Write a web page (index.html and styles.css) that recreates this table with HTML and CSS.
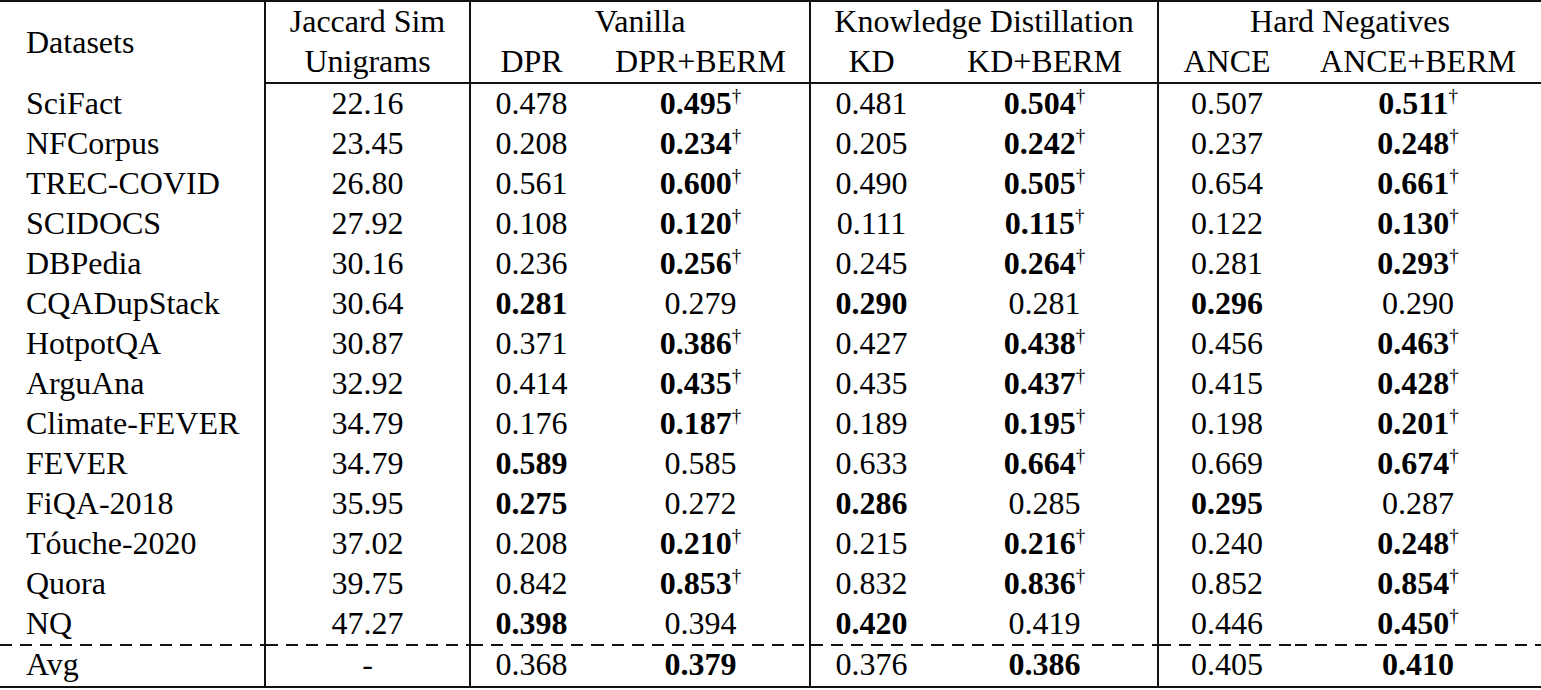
FILE: index.html
```html
<!DOCTYPE html>
<html lang="en">
<head>
<meta charset="utf-8">
<title>Results table</title>
<link rel="stylesheet" href="styles.css">
</head>
<body>
<table class="results">
  <colgroup>
    <col class="c-ds"><col class="c-jac"><col class="c-dpr"><col class="c-dprb"><col class="c-kd"><col class="c-kdb"><col class="c-ance"><col class="c-anceb">
  </colgroup>
  <thead>
    <tr class="h1">
      <th rowspan="2" class="ds">Datasets</th>
      <th class="vl">Jaccard Sim</th>
      <th colspan="2" class="vl">Vanilla</th>
      <th colspan="2" class="vl">Knowledge Distillation</th>
      <th colspan="2" class="vl">Hard Negatives</th>
    </tr>
    <tr class="h2">
      <th class="vl">Unigrams</th>
      <th class="vl">DPR</th><th>DPR+BERM</th>
      <th class="vl">KD</th><th>KD+BERM</th>
      <th class="vl">ANCE</th><th>ANCE+BERM</th>
    </tr>
  </thead>
  <tbody>
    <tr><td class="ds">SciFact</td><td class="vl">22.16</td><td class="vl">0.478</td><td><b>0.495</b><sup>†</sup></td><td class="vl">0.481</td><td><b>0.504</b><sup>†</sup></td><td class="vl">0.507</td><td><b>0.511</b><sup>†</sup></td></tr>
    <tr><td class="ds">NFCorpus</td><td class="vl">23.45</td><td class="vl">0.208</td><td><b>0.234</b><sup>†</sup></td><td class="vl">0.205</td><td><b>0.242</b><sup>†</sup></td><td class="vl">0.237</td><td><b>0.248</b><sup>†</sup></td></tr>
    <tr><td class="ds">TREC-COVID</td><td class="vl">26.80</td><td class="vl">0.561</td><td><b>0.600</b><sup>†</sup></td><td class="vl">0.490</td><td><b>0.505</b><sup>†</sup></td><td class="vl">0.654</td><td><b>0.661</b><sup>†</sup></td></tr>
    <tr><td class="ds">SCIDOCS</td><td class="vl">27.92</td><td class="vl">0.108</td><td><b>0.120</b><sup>†</sup></td><td class="vl">0.111</td><td><b>0.115</b><sup>†</sup></td><td class="vl">0.122</td><td><b>0.130</b><sup>†</sup></td></tr>
    <tr><td class="ds">DBPedia</td><td class="vl">30.16</td><td class="vl">0.236</td><td><b>0.256</b><sup>†</sup></td><td class="vl">0.245</td><td><b>0.264</b><sup>†</sup></td><td class="vl">0.281</td><td><b>0.293</b><sup>†</sup></td></tr>
    <tr><td class="ds">CQADupStack</td><td class="vl">30.64</td><td class="vl"><b>0.281</b></td><td>0.279</td><td class="vl"><b>0.290</b></td><td>0.281</td><td class="vl"><b>0.296</b></td><td>0.290</td></tr>
    <tr><td class="ds">HotpotQA</td><td class="vl">30.87</td><td class="vl">0.371</td><td><b>0.386</b><sup>†</sup></td><td class="vl">0.427</td><td><b>0.438</b><sup>†</sup></td><td class="vl">0.456</td><td><b>0.463</b><sup>†</sup></td></tr>
    <tr><td class="ds">ArguAna</td><td class="vl">32.92</td><td class="vl">0.414</td><td><b>0.435</b><sup>†</sup></td><td class="vl">0.435</td><td><b>0.437</b><sup>†</sup></td><td class="vl">0.415</td><td><b>0.428</b><sup>†</sup></td></tr>
    <tr><td class="ds">Climate-FEVER</td><td class="vl">34.79</td><td class="vl">0.176</td><td><b>0.187</b><sup>†</sup></td><td class="vl">0.189</td><td><b>0.195</b><sup>†</sup></td><td class="vl">0.198</td><td><b>0.201</b><sup>†</sup></td></tr>
    <tr><td class="ds">FEVER</td><td class="vl">34.79</td><td class="vl"><b>0.589</b></td><td>0.585</td><td class="vl">0.633</td><td><b>0.664</b><sup>†</sup></td><td class="vl">0.669</td><td><b>0.674</b><sup>†</sup></td></tr>
    <tr><td class="ds">FiQA-2018</td><td class="vl">35.95</td><td class="vl"><b>0.275</b></td><td>0.272</td><td class="vl"><b>0.286</b></td><td>0.285</td><td class="vl"><b>0.295</b></td><td>0.287</td></tr>
    <tr><td class="ds">Tóuche-2020</td><td class="vl">37.02</td><td class="vl">0.208</td><td><b>0.210</b><sup>†</sup></td><td class="vl">0.215</td><td><b>0.216</b><sup>†</sup></td><td class="vl">0.240</td><td><b>0.248</b><sup>†</sup></td></tr>
    <tr><td class="ds">Quora</td><td class="vl">39.75</td><td class="vl">0.842</td><td><b>0.853</b><sup>†</sup></td><td class="vl">0.832</td><td><b>0.836</b><sup>†</sup></td><td class="vl">0.852</td><td><b>0.854</b><sup>†</sup></td></tr>
    <tr><td class="ds">NQ</td><td class="vl">47.27</td><td class="vl"><b>0.398</b></td><td>0.394</td><td class="vl"><b>0.420</b></td><td>0.419</td><td class="vl">0.446</td><td><b>0.450</b><sup>†</sup></td></tr>
    <tr class="avg"><td class="ds">Avg</td><td class="vl">-</td><td class="vl">0.368</td><td><b>0.379</b></td><td class="vl">0.376</td><td><b>0.386</b></td><td class="vl">0.405</td><td><b>0.410</b></td></tr>
  </tbody>
</table>
</body>
</html>
```

FILE: styles.css
```css
html, body {
  margin: 0;
  padding: 0;
  background: #ffffff;
}

body {
  font-family: "Liberation Serif", "Times New Roman", serif;
  font-size: 32px;
  color: #000000;
}

.results {
  width: 1541px;
  table-layout: fixed;
  border-collapse: collapse;
  border-top: 2px solid #111;
  border-bottom: 2px solid #111;
}

.c-ds { width: 265px; }
.c-jac { width: 205px; }
.c-dpr { width: 122px; }
.c-dprb { width: 218px; }
.c-kd { width: 122px; }
.c-kdb { width: 226px; }
.c-ance { width: 137px; }
.c-anceb { width: 246px; }

.results th,
.results td {
  padding: 0 0 2px 0;
  line-height: 38px;
  text-align: center;
  font-weight: normal;
  white-space: nowrap;
  vertical-align: middle;
}

.results .ds {
  text-align: left;
  padding-left: 26px;
}

.results .vl {
  border-left: 2px solid #111;
}

.results thead tr.h2 th {
  border-bottom: 2px solid #111;
}

.results b {
  font-weight: bold;
}

.results sup {
  font-size: 19px;
  line-height: 0;
  vertical-align: 12px;
  font-weight: normal;
}

.results tr.avg td {
  line-height: 40px;
  background-image: linear-gradient(to right, #111 0 12px, transparent 12px 20px);
  background-size: 20px 2px;
  background-repeat: repeat-x;
  background-position: 0 0;
}
```
